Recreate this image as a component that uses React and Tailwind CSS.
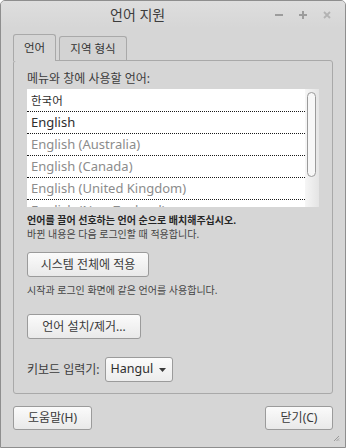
import React from "react";

function Btn({ children, className = "" }) {
  return (
    <div
      className={
        "flex items-center justify-center rounded-[3px] border border-[#9b9b9b] bg-gradient-to-b from-[#fbfbfb] to-[#e9e9e9] text-[#3a3a3a] " +
        className
      }
    >
      {children}
    </div>
  );
}

const rows = [
  { t: "한국어", cls: "text-[11.5px] text-[#2e2e2e]" },
  { t: "English", cls: "text-[13px] text-[#2e2e2e]" },
  { t: "English (Australia)", cls: "text-[13px] text-[#8c8c8c]" },
  { t: "English (Canada)", cls: "text-[13px] text-[#8c8c8c]" },
  { t: "English (United Kingdom)", cls: "text-[13px] text-[#8c8c8c]" },
  { t: "English (New Zealand)", cls: "text-[13px] text-[#8c8c8c]" },
];

export default function App() {
  return (
    <div className="relative w-[346px] h-[448px] border border-[#8e8e8e] rounded-t-[5px] bg-[#d6d6d6] flex flex-col overflow-hidden font-['Noto_Sans','Noto_Sans_CJK_KR',sans-serif]">
      {/* title bar */}
      <div className="h-[27px] flex items-center bg-gradient-to-b from-[#dedede] to-[#d6d6d6]">
        <div className="pl-[109px] text-[14px] text-[#3c3c3c]">언어 지원</div>
        <div className="ml-auto flex items-center gap-[14px] pr-[13px]">
          <svg width="10" height="10" viewBox="0 0 10 10">
            <rect x="1" y="4" width="8" height="2" fill="#9c9c9c" />
          </svg>
          <svg width="10" height="10" viewBox="0 0 10 10">
            <rect x="1" y="4" width="8" height="2" fill="#9c9c9c" />
            <rect x="4" y="1" width="2" height="8" fill="#9c9c9c" />
          </svg>
          <svg width="10" height="10" viewBox="0 0 10 10">
            <path d="M2 2 L8 8 M8 2 L2 8" stroke="#b3b3b3" strokeWidth="1.8" />
          </svg>
        </div>
      </div>

      {/* tabs */}
      <div className="relative z-10 mt-[6px] -mb-px flex items-end pl-[12px]">
        <div className="h-[27px] w-[43px] rounded-t-[3px] border border-b-0 border-[#a9a9a9] bg-[#d6d6d6] flex items-center justify-center text-[11.5px] text-[#333]">
          언어
        </div>
        <div className="mb-px ml-[3px] h-[24px] w-[68px] rounded-t-[3px] border border-b-0 border-[#a9a9a9] bg-[#d3d3d3] flex items-center justify-center text-[11.5px] text-[#333]">
          지역 형식
        </div>
      </div>

      {/* panel */}
      <div className="mx-[12px] h-[334px] rounded-[3px] border border-[#a9a9a9] pl-[13px] pt-[10px] flex flex-col">
        <div className="text-[12px] leading-[16px] text-[#3c3c3c]">메뉴와 창에 사용할 언어:</div>
        <div className="mt-[2px] w-[292px] h-[118px] flex bg-white overflow-hidden">
          <div className="w-[278px] pt-px">
            {rows.map((r, i) => (
              <div
                key={i}
                className={
                  "h-[22px] border-b border-dotted border-[#1a1a1a] pl-[4px] flex items-center whitespace-nowrap " +
                  r.cls
                }
              >
                {r.t}
              </div>
            ))}
          </div>
          <div className="w-[14px] h-full bg-gradient-to-r from-[#f6f6f6] to-[#e4e4e4] pt-[3px] pl-[2px]">
            <div className="w-[9px] h-[85px] rounded-full border border-[#9a9a9a] bg-[#f7f7f7]" />
          </div>
        </div>
        <div className="mt-[6px] text-[10px] leading-[14px] font-bold text-[#262626]">
          언어를 끌어 선호하는 언어 순으로 배치해주십시오.
        </div>
        <div className="text-[10px] leading-[14px] text-[#444]">
          바뀐 내용은 다음 로그인할 때 적용합니다.
        </div>
        <Btn className="mt-[11px] w-[122px] h-[25px] text-[12px]">시스템 전체에 적용</Btn>
        <div className="mt-[6px] text-[10px] leading-[14px] text-[#444]">
          시작과 로그인 화면에 같은 언어를 사용합니다.
        </div>
        <Btn className="mt-[17px] w-[114px] h-[25px] text-[12px]">언어 설치/제거...</Btn>
        <div className="mt-[18px] flex items-center">
          <div className="text-[12px] text-[#3c3c3c]">키보드 입력기:</div>
          <div className="ml-[5px] w-[68px] h-[25px] rounded-[3px] border border-[#9b9b9b] bg-gradient-to-b from-[#fbfbfb] to-[#ececec] flex items-center pl-[5px] pr-[6px]">
            <span className="text-[12.5px] text-[#2e2e2e]">Hangul</span>
            <svg className="ml-auto" width="7" height="4" viewBox="0 0 7 4">
              <path d="M0 0 L7 0 L3.5 4 Z" fill="#3a3a3a" />
            </svg>
          </div>
        </div>
      </div>

      {/* bottom buttons */}
      <div className="mt-[12px] px-[12px] flex justify-between">
        <Btn className="w-[79px] h-[24px] text-[12px]">도움말(H)</Btn>
        <Btn className="w-[68px] h-[24px] text-[12px]">닫기(C)</Btn>
      </div>

      <svg className="absolute right-[5px] bottom-[5px]" width="7" height="7" viewBox="0 0 7 7">
        <path d="M6 1 L1 6 M6 3.5 L3.5 6 M6 5.5 L5.5 6" stroke="#9a9a9a" strokeWidth="1" />
      </svg>
    </div>
  );
}
